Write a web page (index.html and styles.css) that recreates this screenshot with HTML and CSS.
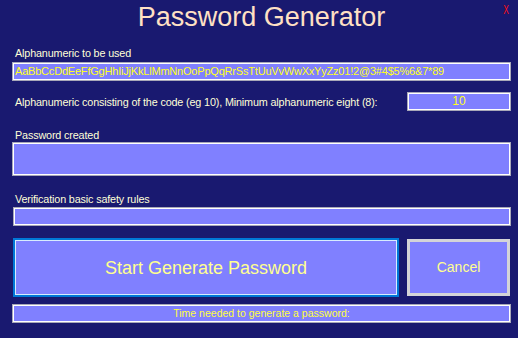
FILE: index.html
```html
<!DOCTYPE html>
<html>
<head>
<meta charset="utf-8">
<link rel="stylesheet" href="styles.css">
</head>
<body>
<div class="window">
  <header class="header">
    <h1 class="title">Password Generator</h1>
    <span class="close">X</span>
  </header>
  <div class="label label-first">Alphanumeric to be used</div>
  <div class="box box-short text-left">AaBbCcDdEeFfGgHhIiJjKkLlMmNnOoPpQqRrSsTtUuVvWwXxYyZz01!2@3#4$5%6&amp;7*89</div>
  <div class="row-length">
    <div class="label">Alphanumeric consisting of the code (eg 10), Minimum alphanumeric eight (8):</div>
    <div class="box box-short box-num">10</div>
  </div>
  <div class="label label-gap">Password created</div>
  <div class="box box-tall"></div>
  <div class="label label-gap label-rules">Verification basic safety rules</div>
  <div class="box box-short box-rules"></div>
  <div class="buttons">
    <div class="btn btn-start">Start Generate Password</div>
    <div class="btn btn-cancel">Cancel</div>
  </div>
  <div class="box box-short box-status">Time needed to generate a password:</div>
</div>
</body>
</html>
```

FILE: styles.css
```css
html, body {
  margin: 0;
  padding: 0;
  background: #191970;
}
body {
  width: 518px;
  height: 338px;
  overflow: hidden;
  font-family: "Liberation Sans", Arial, sans-serif;
}
.window {
  position: relative;
  display: flex;
  flex-direction: column;
  padding: 0 7px 0 12px;
  width: 518px;
  height: 338px;
  box-sizing: border-box;
}
.header {
  height: 34px;
  display: flex;
  justify-content: center;
}
.title {
  margin: 0;
  font-weight: normal;
  font-size: 27px;
  line-height: 34px;
  color: #ffe0c4;
  padding-left: 0;
}
.close {
  position: absolute;
  top: 3px;
  right: 8px;
  color: #ff1010;
  font-size: 12px;
  line-height: 14px;
  transform: scaleX(0.7);
}
.label {
  font-size: 10.8px;
  line-height: 14px;
  color: #ffffd8;
  padding-left: 3px;
  letter-spacing: -0.15px;
}
.label-first {
  margin-top: 12px;
  margin-bottom: 2px;
}
.label-gap {
  margin-top: 17px;
}
.label-rules {
  margin-top: 16px;
  margin-bottom: 1px;
}
.box {
  box-sizing: border-box;
  background: #8080ff;
  border: 1px solid #a8a8b8;
  box-shadow: inset 0 0 0 1px #ffffff;
  color: #ffff20;
  font-size: 11px;
}
.box-short {
  height: 19px;
  line-height: 17px;
}
.text-left {
  padding-left: 2px;
  letter-spacing: -0.2px;
  white-space: nowrap;
  overflow: hidden;
}
.row-length {
  margin-top: 11px;
  display: flex;
  align-items: center;
  justify-content: space-between;
}
.box-num {
  width: 104px;
  text-align: center;
  font-size: 12px;
}
.box-tall {
  height: 34px;
}
.box-rules {
  margin-left: 1px;
}
.buttons {
  margin-top: 12px;
  display: flex;
  gap: 8px;
  align-items: flex-start;
}
.btn {
  box-sizing: border-box;
  background: #8080ff;
  display: flex;
  align-items: center;
  justify-content: center;
  color: #ffff90;
}
.btn-start {
  margin-left: 1px;
  width: 386px;
  height: 59px;
  border: 2px solid #0078d7;
  box-shadow: inset 0 0 0 1px #d8ecff;
  font-size: 18px;
  padding-top: 1px;
}
.btn-cancel {
  margin-top: 1px;
  width: 103px;
  height: 57px;
  border: 3px solid #d4d4d8;
  font-size: 14px;
  padding-bottom: 1px;
}
.box-status {
  margin-top: 7px;
  text-align: center;
  color: #ffff40;
  font-size: 10.5px;
}
```
